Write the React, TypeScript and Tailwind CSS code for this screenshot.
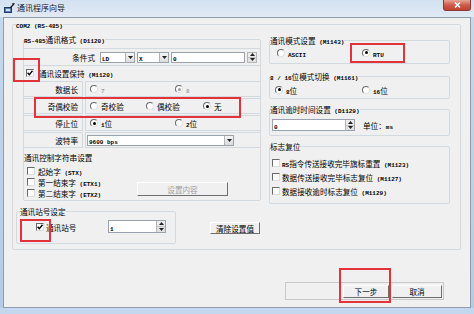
import React from "react";

const RE = /([\u3000-\u9fff\uff00-\uffef]+)/;

function Tx({ s, gray }: { s: string; gray?: boolean }) {
  const parts = s.split(RE).filter((p) => p !== "");
  return (
    <span className={gray ? "text-[#a0a0a0] whitespace-nowrap" : "whitespace-nowrap"}>
      {parts.map((p, i) =>
        RE.test(p) ? (
          <span key={i} className="text-[7.6px]">
            {p}
          </span>
        ) : (
          <span key={i} className="text-[6px] font-bold">
            {p}
          </span>
        )
      )}
    </span>
  );
}

function Check({ checked }: { checked?: boolean }) {
  return (
    <span className="inline-flex w-[8px] h-[8px] shrink-0 bg-white border border-t-[#6a6a6a] border-l-[#6a6a6a] border-r-[#dcdcdc] border-b-[#dcdcdc]">
      {checked && (
        <svg width="6" height="6" viewBox="0 0 6 6">
          <path d="M0.6 2.8 L2.3 4.7 L5.5 0.8" fill="none" stroke="#000" strokeWidth="1.4" />
        </svg>
      )}
    </span>
  );
}

function Radio({ checked, disabled }: { checked?: boolean; disabled?: boolean }) {
  return (
    <span className="inline-flex items-center justify-center w-[8px] h-[8px] shrink-0 rounded-full bg-white border border-t-[#6a6a6a] border-l-[#6a6a6a] border-r-[#e0e0e0] border-b-[#e0e0e0]">
      {checked && (
        <span className={disabled ? "w-[3px] h-[3px] rounded-full bg-[#a0a0a0]" : "w-[3px] h-[3px] rounded-full bg-black"} />
      )}
    </span>
  );
}

function Arrow({ up }: { up?: boolean }) {
  return (
    <svg width="5" height="3" viewBox="0 0 5 3">
      <path d={up ? "M0 3 L2.5 0 L5 3 Z" : "M0 0 L5 0 L2.5 3 Z"} fill="#222" />
    </svg>
  );
}

function DropBtn() {
  return (
    <span className="flex items-center justify-center w-[9px] h-full bg-gradient-to-b from-[#f4f4f4] to-[#dcdcdc] border-l border-[#b5b5b5]">
      <Arrow />
    </span>
  );
}

function Spin() {
  return (
    <span className="flex flex-col w-[9px] h-full border-l border-[#b5b5b5]">
      <span className="flex-1 flex items-center justify-center bg-[#ececec] border-b border-[#c4c4c4]">
        <Arrow up />
      </span>
      <span className="flex-1 flex items-center justify-center bg-[#e2e2e2]">
        <Arrow />
      </span>
    </span>
  );
}

function Group({
  label,
  className,
  legendClass,
  children,
}: {
  label: string;
  className: string;
  legendClass?: string;
  children?: React.ReactNode;
}) {
  return (
    <fieldset className={`border border-[#d2d9df] rounded-[2px] shrink-0 ${className}`}>
      <legend className={`h-[10px] leading-[10px] ${legendClass ?? ""}`}>
        <Tx s={label} />
      </legend>
      {children}
    </fieldset>
  );
}

function Btn({ label, className, disabled }: { label: string; className: string; disabled?: boolean }) {
  return (
    <div
      className={`flex items-center justify-center shrink-0 bg-[#f0f0f0] border border-t-white border-l-white border-r-[#6e6e6e] border-b-[#6e6e6e] ${className}`}
    >
      <Tx s={label} gray={disabled} />
    </div>
  );
}

function RadioItem({
  label,
  checked,
  disabled,
  className,
}: {
  label: string;
  checked?: boolean;
  disabled?: boolean;
  className?: string;
}) {
  return (
    <div className={`flex items-center shrink-0 ${className ?? ""}`}>
      <Radio checked={checked} disabled={disabled} />
      <span className="ml-[3px]">
        <Tx s={label} gray={disabled} />
      </span>
    </div>
  );
}

function Row({ label, children }: { label: string; children: React.ReactNode }) {
  return (
    <div className="-mx-px flex h-[16px] mb-[1px] gap-[2px]">
      <div className="w-[60px] shrink-0 border border-[#d2d9df] flex items-center justify-end pr-[4px]">
        <Tx s={label} />
      </div>
      <div className="flex-1 border border-[#d2d9df] flex items-center pl-[4px]">{children}</div>
    </div>
  );
}

function Red({ className }: { className: string }) {
  return <div className={`absolute border-2 border-[#e2333b] ${className}`} />;
}

export default function App() {
  return (
    <div className="relative w-[474px] h-[314px] overflow-hidden bg-[#c3d8ee] font-['Liberation_Mono','Noto_Sans_CJK_SC',monospace] text-black leading-none">
      {/* title bar */}
      <div className="relative h-[17px] flex items-center bg-gradient-to-b from-[#d2e1f1] to-[#e1eaf4]">
        <svg className="ml-[4px]" width="11" height="11" viewBox="0 0 11 11">
          <rect x="0.5" y="4.5" width="7" height="5" fill="#5b7fb5" stroke="#203a66" />
          <rect x="2" y="6" width="4" height="2" fill="#cfe0f5" />
          <path d="M6 5 L10 1" stroke="#1d1d1d" strokeWidth="1.2" />
          <path d="M8 1 L10.5 0.5" stroke="#1d1d1d" strokeWidth="1" />
        </svg>
        <span className="ml-[2px] text-[8px] text-[#1a1a1a]">通讯程序向导</span>
        <div className="absolute right-[3px] top-0 w-[28px] h-[11px] rounded-b-[3px] bg-gradient-to-b from-[#e6a394] via-[#d05a4c] to-[#c2402f] border border-t-0 border-[#8a3b33] flex items-center justify-center">
          <svg width="7" height="6" viewBox="0 0 7 6">
            <path d="M1 0.5 L6 5.5 M6 0.5 L1 5.5" stroke="#fff" strokeWidth="1.5" />
          </svg>
        </div>
      </div>

      <div className="flex h-[291px]">
        <div className="w-[3px] bg-gradient-to-b from-[#c5d9ee] to-[#b3cbe6]" />
        <div className="w-[468px] bg-[#f0f0f0] border border-[#8f9cab] flex flex-col">
          {/* COM2 outer group */}
          <Group label="COM2 (RS-485)" className="ml-[8px] mt-[1px] w-[449px] h-[231px]" legendClass="ml-[3px]">
            <div className="flex">
              {/* left column */}
              <div className="w-[249px] shrink-0 flex flex-col">
                <Group label="RS-485通讯格式 (D1120)" className="ml-[10px] mt-[5px] w-[238px] h-[167px]" legendClass="ml-0">
                  <div className="-mx-px mt-[4px] h-[18px] border border-[#d2d9df] flex items-center">
                    <div className="w-[71px] text-right shrink-0">
                      <Tx s="条件式" />
                    </div>
                    <div className="ml-[5px] w-[35px] h-[11px] flex bg-white border border-[#9aa3ad]">
                      <span className="flex-1 flex items-center pl-[1px]">
                        <Tx s="LD" />
                      </span>
                      <DropBtn />
                    </div>
                    <div className="ml-[2px] w-[32px] h-[11px] flex bg-white border border-[#9aa3ad]">
                      <span className="flex-1 flex items-center pl-[1px]">
                        <Tx s="X" />
                      </span>
                      <DropBtn />
                    </div>
                    <div className="ml-[2px] w-[74px] h-[11px] flex items-center bg-white border border-[#9aa3ad] pl-[1px]">
                      <Tx s="0" />
                    </div>
                    <div className="ml-[2px] w-[10px] h-[11px] flex border border-[#b5b5b5] border-l-0">
                      <Spin />
                    </div>
                  </div>
                  <div className="-mx-px h-[14px] flex items-center pl-[3px]">
                    <Check checked />
                    <span className="ml-[5px]">
                      <Tx s="通讯设置保持 (M1120)" />
                    </span>
                  </div>
                  <div className="mt-[1px]">
                    <Row label="数据长">
                      <RadioItem label="7" disabled className="w-[85px]" />
                      <RadioItem label="8" checked disabled />
                    </Row>
                    <Row label="奇偶校验">
                      <RadioItem label="奇校验" className="w-[56px]" />
                      <RadioItem label="偶校验" className="w-[57px]" />
                      <RadioItem label="无" checked />
                    </Row>
                    <Row label="停止位">
                      <RadioItem label="1位" checked className="w-[85px]" />
                      <RadioItem label="2位" />
                    </Row>
                    <Row label="波特率">
                      <div className="-ml-[3px] w-[147px] h-[11px] flex bg-white border border-[#9aa3ad]">
                        <span className="flex-1 flex items-center pl-[1px]">
                          <Tx s="9600 bps" />
                        </span>
                        <DropBtn />
                      </div>
                    </Row>
                  </div>
                  <div className="mt-[4px] h-[10px] flex items-center">
                    <Tx s="通讯控制字符串设置" />
                  </div>
                  <div className="flex mt-[3px]">
                    <div className="w-[110px] shrink-0 flex flex-col pl-[3px]">
                      <div className="h-[11px] flex items-center">
                        <Check />
                        <span className="ml-[3px]">
                          <Tx s="起始字 (STX)" />
                        </span>
                      </div>
                      <div className="h-[11px] flex items-center">
                        <Check />
                        <span className="ml-[3px]">
                          <Tx s="第一结束字 (ETX1)" />
                        </span>
                      </div>
                      <div className="h-[11px] flex items-center">
                        <Check />
                        <span className="ml-[3px]">
                          <Tx s="第二结束字 (ETX2)" />
                        </span>
                      </div>
                    </div>
                    <Btn label="设置内容" disabled className="ml-[3px] mt-[17px] w-[91px] h-[14px]" />
                  </div>
                </Group>
                <div className="flex mt-[5px]">
                  <Group label="通讯站号设定" className="ml-[3px] w-[160px] h-[38px]" legendClass="ml-[3px]">
                    <div className="flex items-center mt-[4px] h-[13px] pl-[19px]">
                      <Check checked />
                      <span className="ml-[2px] w-[32px]">
                        <Tx s="通讯站号" />
                      </span>
                      <div className="ml-[30px] w-[58px] h-[13px] flex bg-white border border-[#9aa3ad]">
                        <span className="flex-1 flex items-center pl-[1px]">
                          <Tx s="1" />
                        </span>
                        <Spin />
                      </div>
                    </div>
                  </Group>
                  <Btn label="清除设置值" className="ml-[34px] mt-[16px] w-[50px] h-[12px]" />
                </div>
              </div>

              {/* right column */}
              <div className="ml-[7px] w-[181px] shrink-0 flex flex-col">
                <Group label="通讯模式设置 (M1143)" className="mt-[6px] w-[181px] h-[29px]">
                  <div className="flex items-center mt-[3px] h-[9px] pl-[7px]">
                    <RadioItem label="ASCII" className="w-[85px]" />
                    <RadioItem label="RTU" checked />
                  </div>
                </Group>
                <Group label="8 / 16位模式切换 (M1161)" className="mt-[7px] w-[181px] h-[28px]">
                  <div className="flex items-center mt-[4px] h-[9px] pl-[5px]">
                    <RadioItem label="8位" checked className="w-[87px]" />
                    <RadioItem label="16位" />
                  </div>
                </Group>
                <Group label="通讯逾时时间设置 (D1129)" className="mt-[5px] w-[181px] h-[32px]">
                  <div className="flex items-center mt-[5px] h-[12px] pl-[2px]">
                    <div className="w-[83px] h-[12px] flex bg-white border border-[#9aa3ad]">
                      <span className="flex-1 flex items-center pl-[1px]">
                        <Tx s="0" />
                      </span>
                      <Spin />
                    </div>
                    <span className="ml-[8px]">
                      <Tx s="单位：ms" />
                    </span>
                  </div>
                </Group>
                <Group label="标志复位" className="mt-[5px] w-[181px] h-[63px]">
                  <div className="flex flex-col mt-[5px] pl-[2px]">
                    <div className="h-[14px] flex items-center">
                      <Check />
                      <span className="ml-[2px]">
                        <Tx s="RS指令传送接收完毕旗标重置 (M1123)" />
                      </span>
                    </div>
                    <div className="h-[14px] flex items-center">
                      <Check />
                      <span className="ml-[2px]">
                        <Tx s="数据传送接收完毕标志复位 (M1127)" />
                      </span>
                    </div>
                    <div className="h-[14px] flex items-center">
                      <Check />
                      <span className="ml-[2px]">
                        <Tx s="数据接收逾时标志复位 (M1129)" />
                      </span>
                    </div>
                  </div>
                </Group>
              </div>
            </div>
          </Group>

          {/* bottom buttons */}
          <div className="ml-[281px] mt-[32px] w-[159px] h-[18px] border border-[#c8c8c8] flex items-center justify-end gap-[3px] pr-[1px]">
            <Btn label="下一步" className="w-[46px] h-[13px]" />
            <Btn label="取消" className="w-[50px] h-[13px]" />
          </div>
        </div>
        <div className="w-[3px] bg-gradient-to-b from-[#c5d9ee] to-[#b3cbe6]" />
      </div>
      <div className="h-[6px] bg-[#c3d8ee]" />

      {/* red annotation boxes */}
      <Red className="left-[13px] top-[58px] w-[27px] h-[24px]" />
      <Red className="left-[34px] top-[97px] w-[207px] h-[21px]" />
      <Red className="left-[350px] top-[43px] w-[55px] h-[20px]" />
      <Red className="left-[20px] top-[219px] w-[31px] h-[23px]" />
      <Red className="left-[339px] top-[268px] w-[52px] h-[35px]" />
    </div>
  );
}
